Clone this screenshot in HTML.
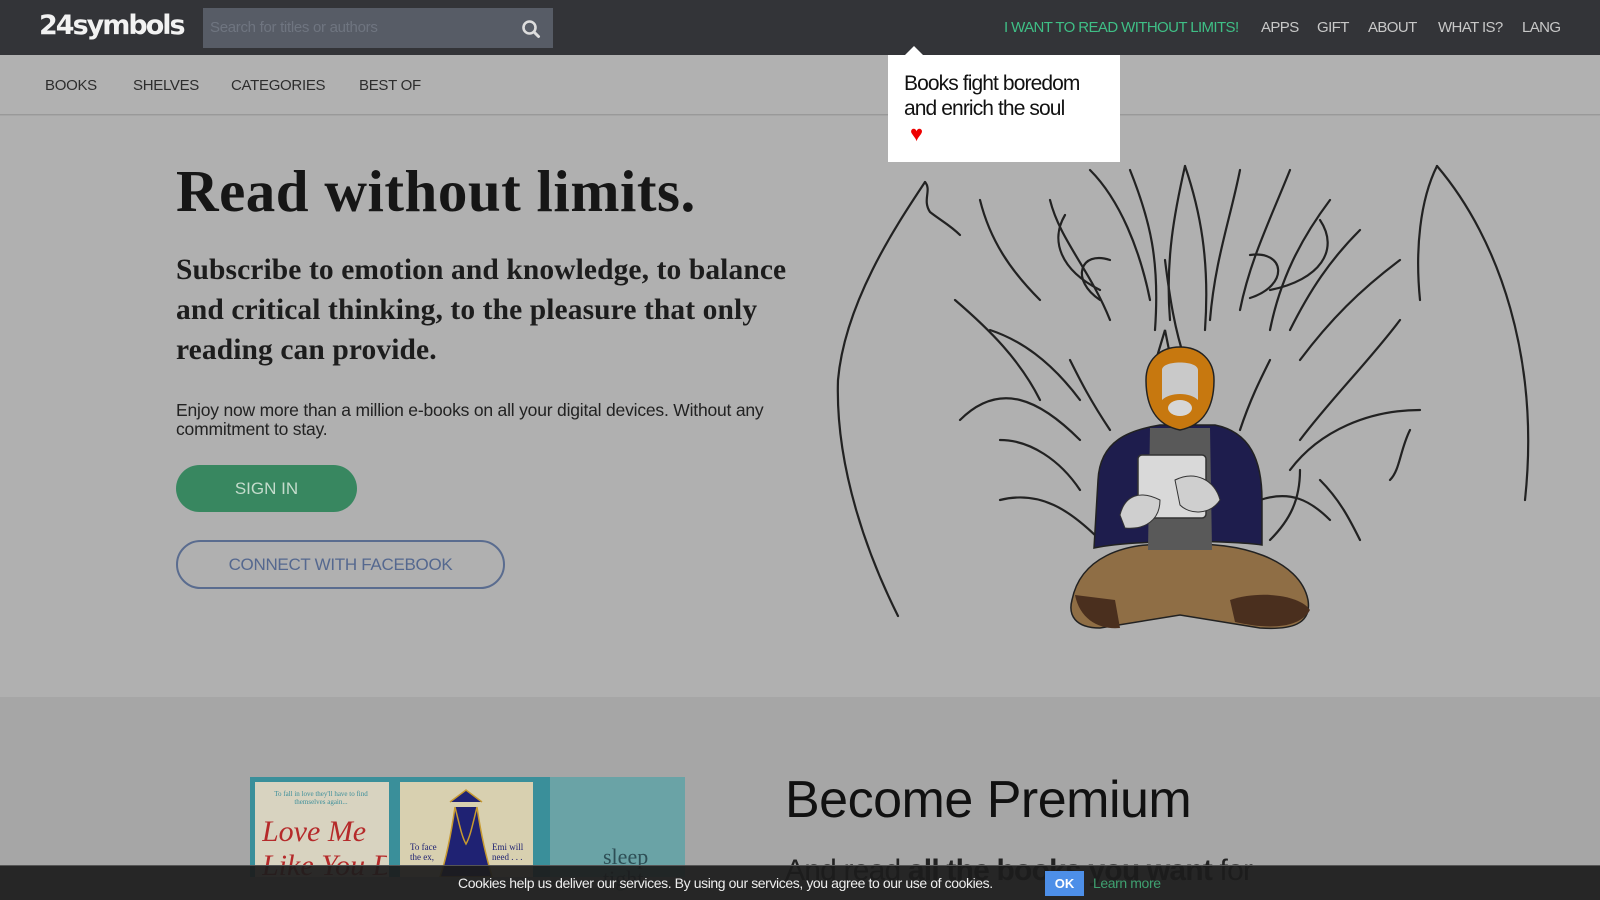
<!DOCTYPE html>
<html><head><meta charset="utf-8">
<style>
*{margin:0;padding:0;box-sizing:border-box}
html,body{width:1600px;height:900px;overflow:hidden;font-family:"Liberation Sans",sans-serif}
body{background:#a6a6a6;position:relative}
.abs{position:absolute}
#hdr{left:0;top:0;width:1600px;height:55px;background:#333438}
#logo{left:39px;top:10px;font-size:27px;font-weight:bold;color:#f2f2f2;letter-spacing:-2px;font-family:"DejaVu Sans","Liberation Sans",sans-serif}
#search{left:203px;top:8px;width:350px;height:40px;background:#575c66}
#search span{position:absolute;left:7px;top:11px;font-size:15px;color:#6f7580;letter-spacing:-.3px}
.rn{top:19px;font-size:15px;color:#c8c8c8;white-space:nowrap;letter-spacing:-.6px}
#sub{left:0;top:55px;width:1600px;height:60px;background:#b1b1b1;border-bottom:1px solid #999}
.sn{top:77px;font-size:15px;color:#2d2d2d;letter-spacing:-.3px}
#hero{left:0;top:116px;width:1600px;height:581px;background:#b0b0b0}
#tip{left:888px;top:55px;width:232px;height:107px;background:#fff;padding:16px 16px;font-size:21px;line-height:25px;color:#111;letter-spacing:-.9px}
#tip:before{content:"";position:absolute;left:17px;top:-9px;border:9px solid transparent;border-top:0;border-bottom-color:#fff}
h1{position:absolute;left:176px;top:157px;font-family:"Liberation Serif",serif;font-weight:bold;font-size:59px;color:#161616;letter-spacing:.5px}
h2{position:absolute;left:176px;top:250px;width:625px;font-family:"Liberation Serif",serif;font-weight:bold;font-size:29.5px;line-height:40px;color:#1d1d1d;letter-spacing:.1px}
#p{left:176px;top:401px;width:630px;font-size:17.5px;line-height:19px;color:#222;letter-spacing:-.2px}
#signin{left:176px;top:465px;width:181px;height:47px;border-radius:24px;background:#388760;color:#c4dccc;font-size:17px;text-align:center;line-height:47px}
#fb{left:176px;top:540px;width:329px;height:49px;border-radius:25px;border:2px solid #5a6c8f;color:#55688f;font-size:17px;text-align:center;line-height:45px;letter-spacing:-.3px}
#prem{left:785px;top:770px;font-size:52px;color:#111;letter-spacing:-.5px}
#prem2{left:785px;top:854px;font-size:30px;color:#222;white-space:nowrap;letter-spacing:-.8px}
#cookie{left:0;top:865px;width:1600px;height:35px;background:rgba(28,28,28,.93);border-top:1px solid #555}
#cookie .t{position:absolute;left:458px;top:9px;font-size:14px;color:#eee;letter-spacing:-.4px}
#ok{position:absolute;left:1045px;top:5px;width:39px;height:25px;background:#4d8fe8;color:#fff;font-size:13px;font-weight:bold;text-align:center;line-height:25px}
#lm{position:absolute;left:1093px;top:9px;font-size:14px;color:#3fa070;letter-spacing:-.4px}
</style></head><body>
<div id="hdr" class="abs"></div>
<div id="logo" class="abs">24symbols</div>
<div id="search" class="abs"><span>Search for titles or authors</span>
<svg style="position:absolute;left:318px;top:11px" width="20" height="20" viewBox="0 0 20 20"><circle cx="8.5" cy="8.5" r="6" fill="none" stroke="#ddd" stroke-width="2.6"/><line x1="13" y1="13" x2="17.5" y2="17.5" stroke="#ddd" stroke-width="3" stroke-linecap="round"/></svg></div>
<div class="abs rn" style="left:1004px;color:#3fbf86">I WANT TO READ WITHOUT LIMITS!</div>
<div class="abs rn" style="left:1261px">APPS</div>
<div class="abs rn" style="left:1317px">GIFT</div>
<div class="abs rn" style="left:1368px">ABOUT</div>
<div class="abs rn" style="left:1438px">WHAT IS?</div>
<div class="abs rn" style="left:1522px">LANG</div>
<div id="sub" class="abs"></div>
<div class="abs sn" style="left:45px">BOOKS</div>
<div class="abs sn" style="left:133px">SHELVES</div>
<div class="abs sn" style="left:231px">CATEGORIES</div>
<div class="abs sn" style="left:359px">BEST OF</div>
<div id="hero" class="abs"></div>
<h1>Read without limits.</h1>
<h2>Subscribe to emotion and knowledge, to balance and critical thinking, to the pleasure that only reading can provide.</h2>
<div id="p" class="abs">Enjoy now more than a million e-books on all your digital devices. Without any commitment to stay.</div>
<div id="signin" class="abs">SIGN IN</div>
<div id="fb" class="abs">CONNECT WITH FACEBOOK</div>

<svg class="abs" style="left:0;top:0" width="1600" height="700" viewBox="0 0 1600 700">
<g fill="none" stroke="#222" stroke-width="2.2" stroke-linecap="round">
<path d="M925 182 C900 220 845 300 838 380 C835 470 870 560 898 616"/>
<path d="M925 182 C932 190 922 200 930 212 C940 220 950 225 960 235"/>
<path d="M1437 166 C1500 240 1540 360 1525 500"/>
<path d="M1437 166 C1420 200 1415 250 1420 300"/>
<path d="M980 200 C990 240 1010 270 1040 300"/><path d="M990 330 C1020 340 1050 360 1080 400"/>
<path d="M1050 200 C1060 240 1090 270 1110 320"/><path d="M1090 170 C1120 200 1140 250 1150 300"/>
<path d="M1130 170 C1150 220 1160 260 1155 330"/><path d="M1185 166 C1175 210 1165 260 1170 320"/>
<path d="M1185 166 C1200 210 1210 260 1205 330"/><path d="M1240 170 C1230 220 1215 260 1210 320"/>
<path d="M1290 170 C1270 220 1250 260 1240 310"/><path d="M1330 200 C1300 240 1280 280 1270 330"/>
<path d="M1360 230 C1330 260 1310 290 1290 330"/><path d="M1400 260 C1360 290 1330 320 1300 360"/>
<path d="M1065 215 C1050 240 1060 270 1100 290"/><path d="M1320 220 C1340 250 1320 280 1270 290"/>
<path d="M1110 260 C1080 250 1070 280 1100 300"/><path d="M1250 255 C1285 250 1290 285 1250 298"/>
<path d="M955 300 C990 330 1020 360 1040 400"/><path d="M960 420 C1000 380 1040 400 1080 440"/>
<path d="M1400 320 C1370 360 1330 400 1300 440"/><path d="M1420 410 C1370 410 1320 430 1290 470"/>
<path d="M1410 430 C1400 450 1400 470 1390 480"/><path d="M1000 440 C1030 440 1060 460 1080 490"/>
<path d="M1000 500 C1040 490 1070 510 1100 540"/><path d="M1300 470 C1300 500 1290 520 1270 540"/>
<path d="M1070 360 C1080 380 1090 400 1110 430"/><path d="M1270 360 C1260 380 1250 400 1240 430"/>
<path d="M1165 260 C1170 300 1175 330 1185 360"/><path d="M1150 380 L1165 330 L1175 380"/>
<path d="M1260 500 C1290 490 1310 500 1330 520"/><path d="M1320 480 C1340 500 1350 520 1360 540"/>
</g>
<path d="M1072 600 C1080 560 1120 540 1180 545 C1240 540 1300 560 1308 600 C1312 625 1290 630 1260 628 L1180 615 L1100 628 C1075 628 1068 615 1072 600Z" fill="#8f6e45" stroke="#222" stroke-width="1.5"/>
<path d="M1075 595 C1080 620 1100 630 1120 628 L1115 600Z" fill="#4a2f1e"/>
<path d="M1230 600 C1260 590 1300 595 1310 610 C1300 628 1270 630 1235 622Z" fill="#4a2f1e"/>
<path d="M1098 480 C1100 440 1130 430 1160 425 L1215 425 C1250 432 1262 460 1262 500 L1262 545 C1230 540 1130 540 1094 548Z" fill="#1e1d4d" stroke="#222" stroke-width="1.5"/>
<path d="M1150 428 L1210 428 L1212 550 L1148 550Z" fill="#595959"/>
<rect x="1138" y="455" width="68" height="63" rx="4" fill="#d9d9d9" stroke="#333" stroke-width="1.5"/>
<path d="M1120 515 C1125 495 1140 490 1160 500 C1160 520 1145 530 1125 528Z" fill="#cfcfcf" stroke="#333"/>
<path d="M1175 480 C1195 470 1215 480 1220 500 C1210 515 1190 515 1180 505Z" fill="#cfcfcf" stroke="#333"/>
<path d="M1180 347 C1160 347 1146 360 1146 380 C1146 405 1155 425 1180 430 C1205 425 1214 405 1214 380 C1214 360 1200 347 1180 347Z" fill="#c7780f" stroke="#222" stroke-width="1.5"/>
<path d="M1162 370 C1162 360 1198 360 1198 370 L1198 400 C1190 392 1170 392 1162 400Z" fill="#c9c9c9"/>
<ellipse cx="1180" cy="408" rx="12" ry="8" fill="#d6d6d6"/>
</svg>

<div id="tip" class="abs">Books fight boredom and enrich the soul<br><span style="color:#e00;font-size:22px;padding-left:6px">♥</span></div>

<div class="abs" style="left:250px;top:777px;width:435px;height:100px;background:#3a8f9a"></div>
<div class="abs" style="left:255px;top:782px;width:134px;height:95px;background:#d8d3c0;overflow:hidden"></div>
<div class="abs" style="left:261px;top:790px;width:120px;font-size:7px;color:#3d8f9a;text-align:center;font-family:'Liberation Serif',serif">To fall in love they'll have to find themselves again...</div>
<div class="abs" style="left:262px;top:815px;width:125px;overflow:hidden;font-size:30px;color:#b52a2a;font-style:italic;font-family:'Liberation Serif',serif;line-height:34px;white-space:nowrap">Love Me<br>Like You Do</div>
<div class="abs" style="left:400px;top:782px;width:133px;height:95px;background:#d8d0b0"></div>
<svg class="abs" style="left:400px;top:782px" width="133" height="95"><path d="M50 20 L66 8 L82 20 M55 25 C60 45 62 55 66 62 C70 55 72 45 77 25 M55 25 C50 60 45 80 40 95 L92 95 C88 80 82 60 77 25" fill="#1f2273" stroke="#c79a30" stroke-width="1.5"/></svg>
<div class="abs" style="left:410px;top:842px;font-size:9px;color:#1f2273;font-family:'Liberation Serif',serif">To face<br>the ex,</div>
<div class="abs" style="left:492px;top:842px;font-size:9px;color:#1f2273;font-family:'Liberation Serif',serif">Emi will<br>need . . .</div>
<div class="abs" style="left:550px;top:777px;width:135px;height:100px;background:#6aa3a6"></div>
<div class="abs" style="left:603px;top:846px;font-size:22px;color:#2d4e55;line-height:22px;font-family:'Liberation Serif',serif">sleep<br>tight</div>

<div id="prem" class="abs">Become Premium</div>
<div id="prem2" class="abs">And read <b>all the books you want</b> for</div>

<div id="cookie" class="abs"><span class="t">Cookies help us deliver our services. By using our services, you agree to our use of cookies.</span><div id="ok">OK</div><span id="lm">Learn more</span></div>
</body></html>
